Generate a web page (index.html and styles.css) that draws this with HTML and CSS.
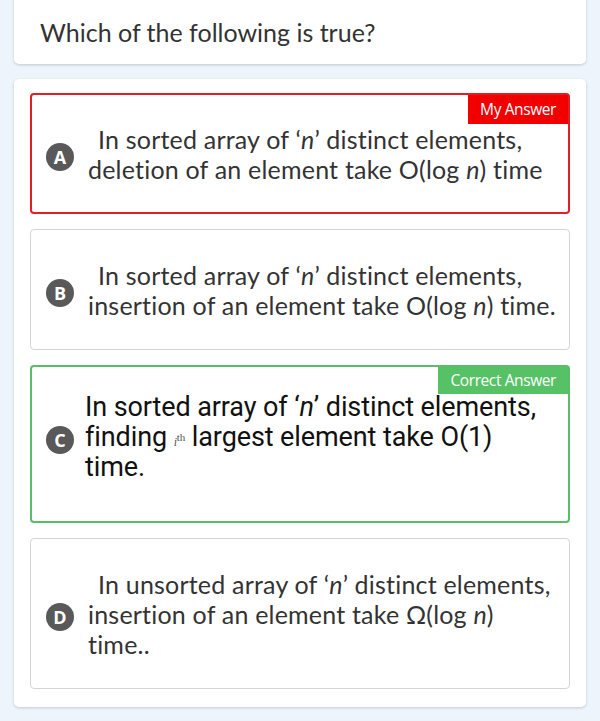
FILE: index.html
```html
<!DOCTYPE html>
<html>
<head>
<meta charset="utf-8">
<link rel="stylesheet" href="styles.css">
</head>
<body>
<div class="page">
  <div class="card question-card">
    <div class="question">Which of the following is true?</div>
  </div>
  <div class="card options-card">
    <div class="option option-wrong">
      <span class="badge badge-red">My Answer</span>
      <span class="letter">A</span>
      <div class="text"><span class="indent">In sorted array of ‘<i>n</i>’ distinct elements,</span><br>deletion of an element take O(log <i>n</i>) time</div>
    </div>
    <div class="option option-plain">
      <span class="letter">B</span>
      <div class="text"><span class="indent">In sorted array of ‘<i>n</i>’ distinct elements,</span><br>insertion of an element take O(log <i>n</i>) time.</div>
    </div>
    <div class="option option-right">
      <span class="badge badge-green">Correct Answer</span>
      <span class="letter">C</span>
      <div class="text text-roboto">In sorted array of ‘<i>n</i>’ distinct elements,<br>finding <span class="ith"><i>i</i><sup>th</sup></span> largest element take O(1)<br>time.</div>
    </div>
    <div class="option option-plain option-d">
      <span class="letter">D</span>
      <div class="text"><span class="indent">In unsorted array of ‘<i>n</i>’ distinct elements,</span><br>insertion of an element take Ω(log <i>n</i>)<br>time..</div>
    </div>
  </div>
  <div class="card next-card"></div>
</div>
</body>
</html>
```
FILE: styles.css
```css
html, body {
  margin: 0;
  padding: 0;
}
body {
  background: #edf4fb;
  font-family: "Lato", "Open Sans", sans-serif;
  color: #333;
  overflow: hidden;
}
.page {
  display: flex;
  flex-direction: column;
  gap: 15px;
  padding: 0 14px;
  margin-top: -10px;
}
.card {
  background: #fff;
  border-radius: 5px;
  box-shadow: 0 1px 3px rgba(0, 0, 0, 0.18);
}
.question-card {
  height: 74px;
  display: flex;
  align-items: center;
  padding: 9px 26px 0;
  box-sizing: border-box;
}
.question {
  font-size: 25px;
  color: #333;
}
.options-card {
  padding: 14px 16px 18px;
  display: flex;
  flex-direction: column;
  gap: 15px;
}
.option {
  position: relative;
  display: flex;
  align-items: center;
  border-radius: 4px;
  padding: 29px 8px 28px 14px;
  background: #fff;
}
.option-wrong {
  border: 2px solid #e21f26;
}
.option-right {
  border: 2px solid #5bbd68;
  padding-top: 25px;
  padding-bottom: 39px;
}
.option-plain {
  border: 1px solid #d4d4d4;
  padding: 30px 9px 29px 15px;
}
.badge {
  position: absolute;
  top: 0;
  right: 0;
  color: #fff;
  font-family: "Open Sans", sans-serif;
  font-size: 15.5px;
  letter-spacing: -0.4px;
  line-height: 29px;
  padding: 0 12px;
}
.badge-red {
  background: #f20000;
}
.badge-green {
  background: #57c265;
  line-height: 27px;
}
.letter {
  flex: none;
  width: 28px;
  height: 28px;
  border-radius: 50%;
  background: #595959;
  color: #fff;
  font-family: "Open Sans", sans-serif;
  font-weight: 700;
  font-size: 18px;
  line-height: 28px;
  text-align: center;
  margin: 6px 14px 0 0;
}
.text {
  font-size: 25px;
  line-height: 30px;
  letter-spacing: 0.2px;
  color: #333;
  white-space: nowrap;
}
.indent {
  padding-left: 10px;
}
.text-roboto {
  font-family: "Roboto", sans-serif;
  font-size: 27px;
  letter-spacing: -0.1px;
  color: #111;
  margin-left: -3px;
}
.ith {
  font-family: "Liberation Serif", serif;
  font-size: 12px;
  line-height: 0;
  color: #555;
}
.ith sup {
  font-size: 11px;
  line-height: 0;
}
.next-card {
  height: 20px;
}
```
